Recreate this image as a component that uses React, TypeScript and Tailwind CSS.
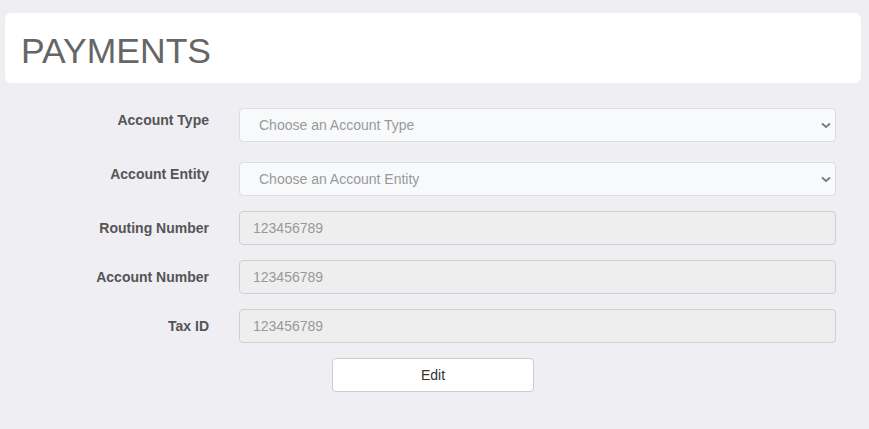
export default function App() {
  const selects = [
    { label: "Account Type", placeholder: "Choose an Account Type" },
    { label: "Account Entity", placeholder: "Choose an Account Entity" },
  ];
  const inputs = [
    { label: "Routing Number", value: "123456789" },
    { label: "Account Number", value: "123456789" },
    { label: "Tax ID", value: "123456789" },
  ];

  return (
    <div
      className="min-h-screen w-full bg-[#eeeef3] pt-[13px] pb-[40px]"
      style={{ fontFamily: '"Liberation Sans", Arial, sans-serif' }}
    >
      {/* Header */}
      <div className="ml-[5px] mr-[8px] flex h-[70px] items-center rounded-[6px] bg-white pl-[16px] pt-[8px]">
        <h1 className="text-[35.5px] leading-none font-normal text-[#666]">PAYMENTS</h1>
      </div>

      {/* Form */}
      <div className="mt-[25px] flex flex-col">
        {selects.map((s) => (
          <div key={s.label} className="mb-[20px] flex items-start">
            <label className="w-[209px] shrink-0 pt-[2px] text-right text-[14px] leading-[20px] font-bold text-[#555]">
              {s.label}
            </label>
            <div className="relative ml-[30px] mr-[33px] flex-1">
              <select
                defaultValue=""
                className="h-[34px] w-full appearance-none rounded-[4px] border border-[#dcdde0] bg-[#f8f9fb] pl-[19px] text-[14px] text-[#999] outline-none"
              >
                <option value="" disabled>
                  {s.placeholder}
                </option>
              </select>
              <svg
                className="pointer-events-none absolute right-[5px] top-[14px]"
                width="10"
                height="7"
                viewBox="0 0 10 7"
                fill="none"
              >
                <path d="M1 1.5 L5 5 L9 1.5" stroke="#7a7a7a" strokeWidth="1.8" />
              </svg>
            </div>
          </div>
        ))}

        {/* Read-only fields */}
        <div className="-mt-[5px] flex flex-col">
          {inputs.map((i) => (
            <div key={i.label} className="mb-[15px] flex items-center">
              <label className="w-[209px] shrink-0 text-right text-[14px] leading-[20px] font-bold text-[#555]">
                {i.label}
              </label>
              <input
                readOnly
                disabled
                value={i.value}
                className="ml-[30px] mr-[33px] h-[34px] min-w-0 flex-1 rounded-[4px] border border-[#cfcfcf] bg-[#eeeeee] pl-[13px] text-[14px] text-[#999]"
              />
            </div>
          ))}
        </div>

        <button className="ml-[332px] h-[34px] w-[202px] rounded-[4px] border border-[#cccccc] bg-white text-[14px] text-[#333]">
          Edit
        </button>
      </div>
    </div>
  );
}
